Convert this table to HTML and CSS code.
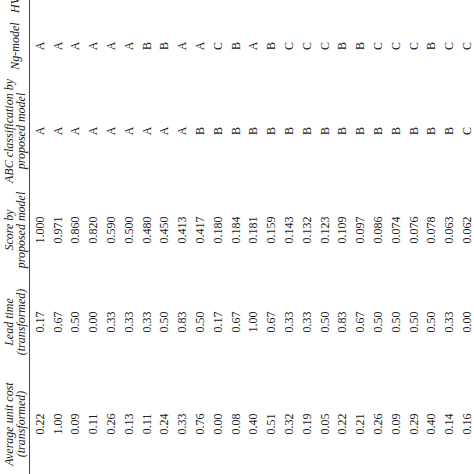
FILE: index.html
```html
<!DOCTYPE html>
<html lang="en">
<head>
<meta charset="utf-8">
<title>ABC classification table</title>
<link rel="stylesheet" href="styles.css">
</head>
<body>
<div class="sheet">
  <div class="grid">
    <div class="th">Average unit cost<br>(transformed)</div>
    <div class="th">Lead time<br>(transformed)</div>
    <div class="th">Score by<br>proposed model</div>
    <div class="th">ABC classification by<br>proposed model</div>
    <div class="th">Ng-model</div>
    <div class="th th-left">HV-model</div>

    <div class="td">0.22</div><div class="td">0.17</div><div class="td">1.000</div><div class="td">A</div><div class="td">A</div><div class="td"></div>
    <div class="td">1.00</div><div class="td">0.67</div><div class="td">0.971</div><div class="td">A</div><div class="td">A</div><div class="td"></div>
    <div class="td">0.09</div><div class="td">0.50</div><div class="td">0.860</div><div class="td">A</div><div class="td">A</div><div class="td"></div>
    <div class="td">0.11</div><div class="td">0.00</div><div class="td">0.820</div><div class="td">A</div><div class="td">A</div><div class="td"></div>
    <div class="td">0.26</div><div class="td">0.33</div><div class="td">0.590</div><div class="td">A</div><div class="td">A</div><div class="td"></div>
    <div class="td">0.13</div><div class="td">0.33</div><div class="td">0.500</div><div class="td">A</div><div class="td">A</div><div class="td"></div>
    <div class="td">0.11</div><div class="td">0.33</div><div class="td">0.480</div><div class="td">A</div><div class="td">B</div><div class="td"></div>
    <div class="td">0.24</div><div class="td">0.50</div><div class="td">0.450</div><div class="td">A</div><div class="td">B</div><div class="td"></div>
    <div class="td">0.33</div><div class="td">0.83</div><div class="td">0.413</div><div class="td">A</div><div class="td">A</div><div class="td"></div>
    <div class="td">0.76</div><div class="td">0.50</div><div class="td">0.417</div><div class="td">B</div><div class="td">A</div><div class="td"></div>
    <div class="td">0.00</div><div class="td">0.17</div><div class="td">0.180</div><div class="td">B</div><div class="td">C</div><div class="td"></div>
    <div class="td">0.08</div><div class="td">0.67</div><div class="td">0.184</div><div class="td">B</div><div class="td">B</div><div class="td"></div>
    <div class="td">0.40</div><div class="td">1.00</div><div class="td">0.181</div><div class="td">B</div><div class="td">A</div><div class="td"></div>
    <div class="td">0.51</div><div class="td">0.67</div><div class="td">0.159</div><div class="td">B</div><div class="td">B</div><div class="td"></div>
    <div class="td">0.32</div><div class="td">0.33</div><div class="td">0.143</div><div class="td">B</div><div class="td">C</div><div class="td"></div>
    <div class="td">0.19</div><div class="td">0.33</div><div class="td">0.132</div><div class="td">B</div><div class="td">C</div><div class="td"></div>
    <div class="td">0.05</div><div class="td">0.50</div><div class="td">0.123</div><div class="td">B</div><div class="td">C</div><div class="td"></div>
    <div class="td">0.22</div><div class="td">0.83</div><div class="td">0.109</div><div class="td">B</div><div class="td">B</div><div class="td"></div>
    <div class="td">0.21</div><div class="td">0.67</div><div class="td">0.097</div><div class="td">B</div><div class="td">B</div><div class="td"></div>
    <div class="td">0.26</div><div class="td">0.50</div><div class="td">0.086</div><div class="td">B</div><div class="td">C</div><div class="td"></div>
    <div class="td">0.09</div><div class="td">0.50</div><div class="td">0.074</div><div class="td">B</div><div class="td">C</div><div class="td"></div>
    <div class="td">0.29</div><div class="td">0.50</div><div class="td">0.076</div><div class="td">B</div><div class="td">C</div><div class="td"></div>
    <div class="td">0.40</div><div class="td">0.50</div><div class="td">0.078</div><div class="td">B</div><div class="td">B</div><div class="td"></div>
    <div class="td">0.14</div><div class="td">0.33</div><div class="td">0.063</div><div class="td">B</div><div class="td">C</div><div class="td"></div>
    <div class="td">0.16</div><div class="td">0.00</div><div class="td">0.062</div><div class="td">C</div><div class="td">C</div><div class="td"></div>
  </div>
</div>
</body>
</html>
```
FILE: styles.css
```css
html, body {
  margin: 0;
  padding: 0;
  background: #ffffff;
  overflow: hidden;
}

.sheet {
  width: 474px;
  height: 474px;
  overflow: hidden;
  transform: rotate(-90deg);
  background: #ffffff;
  color: #222222;
  font-family: "Liberation Serif", "Times New Roman", serif;
  font-size: 12px;
}

.grid {
  display: grid;
  grid-template-columns: 100px 104px 80px 118px 52px 80px;
  grid-template-rows: 31px repeat(25, 17.8px);
  width: 534px;
}

.th {
  height: 30px;
  box-sizing: border-box;
  border-bottom: 1px solid #444444;
  display: flex;
  align-items: center;
  justify-content: center;
  text-align: center;
  font-style: italic;
  line-height: 12px;
  white-space: nowrap;
}

.th-left {
  justify-content: flex-start;
  padding-left: 7px;
}

.td {
  display: flex;
  align-items: center;
  justify-content: center;
  line-height: 1;
  white-space: nowrap;
}
```
